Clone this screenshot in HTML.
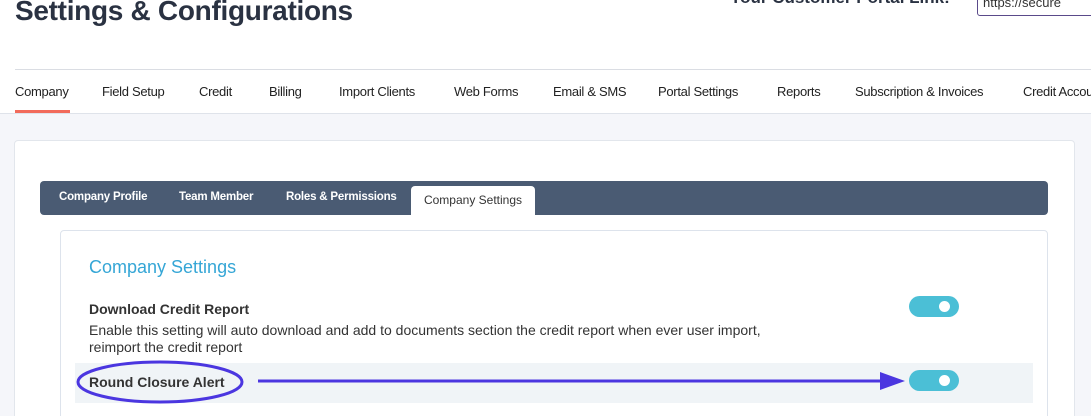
<!DOCTYPE html>
<html><head><style>
html,body{margin:0;width:1091px;height:416px;overflow:hidden}
body{background:#f5f6fa;font-family:"Liberation Sans",sans-serif;position:relative}
.top{position:absolute;left:0;top:0;width:1091px;height:113px;background:#fff;border-bottom:1px solid #dfe3ea}
h1{position:absolute;left:15px;top:-5px;margin:0;font-size:28px;font-weight:bold;color:#2a3242;letter-spacing:-0.3px;white-space:nowrap}
.portal{position:absolute;left:730px;top:-12px;font-size:17px;font-weight:bold;color:#2a3242;white-space:nowrap}
.inp{position:absolute;left:977px;top:-5px;width:120px;height:19px;border:1px solid #5a4a8a;border-radius:3px;font-size:13px;color:#333;padding-left:5px;line-height:14px}
.line{position:absolute;left:15px;top:69px;width:1076px;height:1px;background:#dadde3}
.nav span{position:absolute;top:84px;font-size:13px;color:#222;letter-spacing:-0.3px;white-space:nowrap}
.ul{position:absolute;left:15px;top:110px;width:55px;height:3px;background:#f26b5b}
.card{position:absolute;left:14px;top:140px;width:1059px;height:290px;background:#fff;border:1px solid #e2e6ec;border-radius:4px}
.bar{position:absolute;left:40px;top:181px;width:1008px;height:34px;background:#4a5b73;border-radius:4px}
.bar span{position:absolute;top:10px;font-size:11.5px;font-weight:bold;color:#fff;white-space:nowrap;letter-spacing:-0.2px}
.act{position:absolute;left:411px;top:186px;width:124px;height:29px;background:#fff;border-radius:4px 4px 0 0;font-size:12px;color:#333;text-align:center;line-height:29px}
.inner{position:absolute;left:60px;top:230px;width:986px;height:200px;border:1px solid #dde3ec;border-radius:4px;background:#fff}
.h2{position:absolute;left:89px;top:257px;font-size:18px;color:#35a6d6}
.t{position:absolute;font-size:14px;color:#333;white-space:nowrap}
.row{position:absolute;left:75px;top:363px;width:958px;height:40px;background:#f0f4f7}
.tg{position:absolute;width:50px;height:21px;border-radius:11px;background:#4bbfd6}
.tg:after{content:"";position:absolute;right:9px;top:5px;width:11px;height:11px;border-radius:50%;background:#fff}
</style></head><body>
<div class="top"></div>
<h1>Settings &amp; Configurations</h1>
<div class="portal">Your Customer Portal Link:</div>
<div class="inp">https://secure</div>
<div class="line"></div>
<div class="nav">
<span style="left:15px">Company</span><span style="left:102px">Field Setup</span><span style="left:199px">Credit</span><span style="left:269px">Billing</span><span style="left:339px">Import Clients</span><span style="left:454px">Web Forms</span><span style="left:553px">Email &amp; SMS</span><span style="left:658px">Portal Settings</span><span style="left:777px">Reports</span><span style="left:855px">Subscription &amp; Invoices</span><span style="left:1023px">Credit Accounts</span>
</div>
<div class="ul"></div>
<div class="card"></div>
<div class="bar"><span style="left:19px">Company Profile</span><span style="left:139px">Team Member</span><span style="left:246px">Roles &amp; Permissions</span></div>
<div class="act">Company Settings</div>
<div class="inner"></div>
<div class="h2">Company Settings</div>
<div class="t" style="left:89px;top:301px;font-weight:bold">Download Credit Report</div>
<div class="t" style="left:89px;top:322px;line-height:17px">Enable this setting will auto download and add to documents section the credit report when ever user import,<br>reimport the credit report</div>
<div class="tg" style="left:909px;top:296px"></div>
<div class="row"></div>
<div class="t" style="left:89px;top:374px;font-weight:bold">Round Closure Alert</div>
<div class="tg" style="left:909px;top:370px"></div>
<svg style="position:absolute;left:0;top:0" width="1091" height="416">
<ellipse cx="160" cy="382" rx="82" ry="20" fill="none" stroke="#4b36e0" stroke-width="3"/>
<line x1="258" y1="381" x2="885" y2="381" stroke="#4b36e0" stroke-width="3"/>
<polygon points="880,372 905,381 880,390" fill="#4b36e0"/>
</svg>
</body></html>
